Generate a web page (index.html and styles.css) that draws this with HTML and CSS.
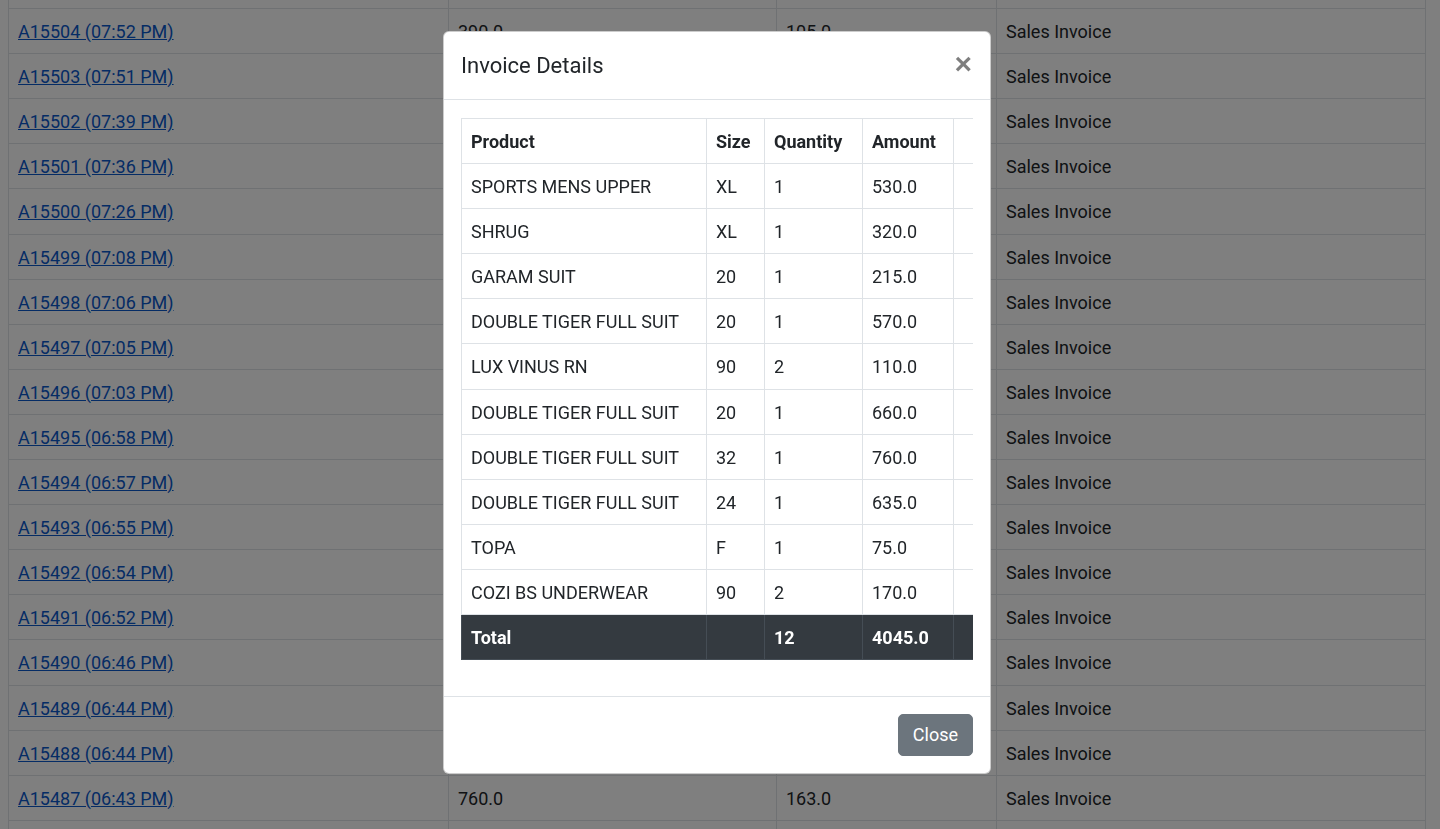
FILE: index.html
```html
<!DOCTYPE html>
<html lang="en">
<head>
    <meta charset="UTF-8">
    <meta name="viewport" content="width=device-width, initial-scale=1.0">
    <title>Invoices</title>
    <link rel="stylesheet" href="styles.css">
</head>
<body>
    <div class="page">
        <table class="list-table">
            <tbody>
                <tr><td><a href="#">A15505 (07:58 PM)</a></td><td>420.0</td><td>112.0</td><td>Sales Invoice</td></tr>
                <tr><td><a href="#">A15504 (07:52 PM)</a></td><td>390.0</td><td>105.0</td><td>Sales Invoice</td></tr>
                <tr><td><a href="#">A15503 (07:51 PM)</a></td><td>530.0</td><td>120.0</td><td>Sales Invoice</td></tr>
                <tr><td><a href="#">A15502 (07:39 PM)</a></td><td>215.0</td><td>48.0</td><td>Sales Invoice</td></tr>
                <tr><td><a href="#">A15501 (07:36 PM)</a></td><td>640.0</td><td>150.0</td><td>Sales Invoice</td></tr>
                <tr><td><a href="#">A15500 (07:26 PM)</a></td><td>320.0</td><td>80.0</td><td>Sales Invoice</td></tr>
                <tr><td><a href="#">A15499 (07:08 PM)</a></td><td>1150.0</td><td>260.0</td><td>Sales Invoice</td></tr>
                <tr><td><a href="#">A15498 (07:06 PM)</a></td><td>570.0</td><td>130.0</td><td>Sales Invoice</td></tr>
                <tr><td><a href="#">A15497 (07:05 PM)</a></td><td>110.0</td><td>25.0</td><td>Sales Invoice</td></tr>
                <tr><td><a href="#">A15496 (07:03 PM)</a></td><td>660.0</td><td>145.0</td><td>Sales Invoice</td></tr>
                <tr><td><a href="#">A15495 (06:58 PM)</a></td><td>4045.0</td><td>890.0</td><td>Sales Invoice</td></tr>
                <tr><td><a href="#">A15494 (06:57 PM)</a></td><td>635.0</td><td>140.0</td><td>Sales Invoice</td></tr>
                <tr><td><a href="#">A15493 (06:55 PM)</a></td><td>75.0</td><td>18.0</td><td>Sales Invoice</td></tr>
                <tr><td><a href="#">A15492 (06:54 PM)</a></td><td>170.0</td><td>40.0</td><td>Sales Invoice</td></tr>
                <tr><td><a href="#">A15491 (06:52 PM)</a></td><td>480.0</td><td>104.0</td><td>Sales Invoice</td></tr>
                <tr><td><a href="#">A15490 (06:46 PM)</a></td><td>890.0</td><td>196.0</td><td>Sales Invoice</td></tr>
                <tr><td><a href="#">A15489 (06:44 PM)</a></td><td>255.0</td><td>57.0</td><td>Sales Invoice</td></tr>
                <tr><td><a href="#">A15488 (06:44 PM)</a></td><td>300.0</td><td>66.0</td><td>Sales Invoice</td></tr>
                <tr><td><a href="#">A15487 (06:43 PM)</a></td><td>760.0</td><td>163.0</td><td>Sales Invoice</td></tr>
                <tr><td><a href="#">A15486 (06:40 PM)</a></td><td>410.0</td><td>90.0</td><td>Sales Invoice</td></tr>
            </tbody>
        </table>
    </div>

    <div class="modal-backdrop"></div>

    <!-- Invoice Details modal -->
    <div class="modal">
        <div class="modal-header">
            <h5 class="modal-title">Invoice Details</h5>
            <button type="button" class="close">&times;</button>
        </div>
        <div class="modal-body">
            <div class="table-responsive">
                <table class="items-table">
                    <colgroup>
                        <col class="col-product">
                        <col class="col-size">
                        <col class="col-qty">
                        <col class="col-amount">
                        <col class="col-extra">
                    </colgroup>
                    <thead>
                        <tr><th>Product</th><th>Size</th><th>Quantity</th><th>Amount</th><th></th></tr>
                    </thead>
                    <tbody>
                        <tr><td>SPORTS MENS UPPER</td><td>XL</td><td>1</td><td>530.0</td><td></td></tr>
                        <tr><td>SHRUG</td><td>XL</td><td>1</td><td>320.0</td><td></td></tr>
                        <tr><td>GARAM SUIT</td><td>20</td><td>1</td><td>215.0</td><td></td></tr>
                        <tr><td>DOUBLE TIGER FULL SUIT</td><td>20</td><td>1</td><td>570.0</td><td></td></tr>
                        <tr><td>LUX VINUS RN</td><td>90</td><td>2</td><td>110.0</td><td></td></tr>
                        <tr><td>DOUBLE TIGER FULL SUIT</td><td>20</td><td>1</td><td>660.0</td><td></td></tr>
                        <tr><td>DOUBLE TIGER FULL SUIT</td><td>32</td><td>1</td><td>760.0</td><td></td></tr>
                        <tr><td>DOUBLE TIGER FULL SUIT</td><td>24</td><td>1</td><td>635.0</td><td></td></tr>
                        <tr><td>TOPA</td><td>F</td><td>1</td><td>75.0</td><td></td></tr>
                        <tr><td>COZI BS UNDERWEAR</td><td>90</td><td>2</td><td>170.0</td><td></td></tr>
                        <tr class="total-row"><th>Total</th><th></th><th>12</th><th>4045.0</th><th></th></tr>
                    </tbody>
                </table>
            </div>
        </div>
        <div class="modal-footer">
            <button type="button" class="btn-close">Close</button>
        </div>
    </div>
</body>
</html>
```

FILE: styles.css
```css
body {
    margin: 0;
    font-family: Roboto, "Liberation Sans", Arial, sans-serif;
    font-size: 18px;
    color: #212529;
    background-color: #fff;
    overflow: hidden;
}
.page {
    padding-left: 8px;
}
.list-table {
    width: 1418px;
    margin-top: -37px;
    border-collapse: collapse;
}
.list-table td {
    border: 1px solid #dee2e6;
    padding: 10px 9px 8px;
    line-height: 26.1px;
    text-align: left;
}
.list-table td:nth-child(1) { width: 421px; }
.list-table td:nth-child(2) { width: 309px; }
.list-table td:nth-child(3) { width: 201px; }
.list-table a {
    color: #0a58ca;
    text-decoration: underline;
}
.modal-backdrop {
    position: fixed;
    top: 0;
    left: 0;
    right: 0;
    bottom: 0;
    background-color: rgba(0, 0, 0, 0.5);
}
.modal {
    position: fixed;
    top: 31px;
    left: 443px;
    width: 548px;
    background-color: #fff;
    border: 1px solid rgba(0, 0, 0, 0.2);
    border-radius: 6px;
    box-sizing: border-box;
}
.modal-header {
    display: flex;
    justify-content: space-between;
    align-items: center;
    padding: 17px 18px 17px 17px;
    border-bottom: 1px solid #dee2e6;
}
.modal-title {
    margin: 0;
    font-size: 22px;
    font-weight: 400;
    line-height: 33px;
}
.close {
    background: none;
    border: none;
    padding: 0 0 4px;
    font-family: "Liberation Sans", Arial, sans-serif;
    font-size: 30px;
    font-weight: 700;
    line-height: 26px;
    color: #000;
    opacity: 0.5;
    cursor: pointer;
}
.modal-body {
    padding: 18px 17px;
}
.table-responsive {
    width: 512px;
    overflow: hidden;
    margin-bottom: 18px;
}
.items-table {
    width: 572px;
    table-layout: fixed;
    border-collapse: collapse;
}
.col-product { width: 245px; }
.col-size { width: 58px; }
.col-qty { width: 98px; }
.col-amount { width: 91px; }
.col-extra { width: 80px; }
.items-table th,
.items-table td {
    border: 1px solid #dee2e6;
    padding: 10px 9px 8px;
    line-height: 26.1px;
    text-align: left;
    white-space: nowrap;
}
.items-table th {
    font-weight: 700;
}
.items-table .total-row th {
    background-color: #343a40;
    color: #fff;
    border-color: #454d55;
}
.modal-footer {
    display: flex;
    justify-content: flex-end;
    padding: 17px 17px 17px;
    border-top: 1px solid #dee2e6;
}
.btn-close {
    background-color: #6c757d;
    color: #fff;
    border: 1px solid #6c757d;
    border-radius: 5px;
    padding: 7px 14px;
    font-family: Roboto, "Liberation Sans", Arial, sans-serif;
    font-size: 18px;
    line-height: 26px;
    cursor: pointer;
}
```
